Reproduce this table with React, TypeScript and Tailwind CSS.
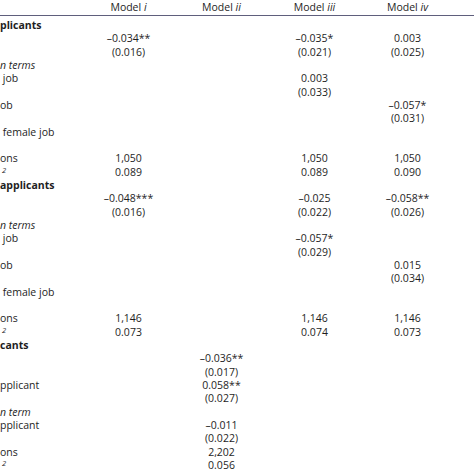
type Row = {
  label?: string
  kind?: "bold" | "italic" | "sup"
  v?: [string?, string?, string?, string?]
}

const rows: Row[] = [
  { label: "plicants", kind: "bold" },
  { v: ["–0.034**", "", "–0.035*", "0.003"] },
  { v: ["(0.016)", "", "(0.021)", "(0.025)"] },
  { label: "n terms", kind: "italic" },
  { label: "\u00a0job", v: ["", "", "0.003", ""] },
  { v: ["", "", "(0.033)", ""] },
  { label: "ob", v: ["", "", "", "–0.057*"] },
  { v: ["", "", "", "(0.031)"] },
  { label: "\u00a0female job" },
  {},
  { label: "ons", v: ["1,050", "", "1,050", "1,050"] },
  { label: "2", kind: "sup", v: ["0.089", "", "0.089", "0.090"] },
  { label: "applicants", kind: "bold" },
  { v: ["–0.048***", "", "–0.025", "–0.058**"] },
  { v: ["(0.016)", "", "(0.022)", "(0.026)"] },
  { label: "n terms", kind: "italic" },
  { label: "\u00a0job", v: ["", "", "–0.057*", ""] },
  { v: ["", "", "(0.029)", ""] },
  { label: "ob", v: ["", "", "", "0.015"] },
  { v: ["", "", "", "(0.034)"] },
  { label: "\u00a0female job" },
  {},
  { label: "ons", v: ["1,146", "", "1,146", "1,146"] },
  { label: "2", kind: "sup", v: ["0.073", "", "0.074", "0.073"] },
  { label: "cants", kind: "bold" },
  { v: ["", "–0.036**", "", ""] },
  { v: ["", "(0.017)", "", ""] },
  { label: "pplicant", v: ["", "0.058**", "", ""] },
  { v: ["", "(0.027)", "", ""] },
  { label: "n term", kind: "italic" },
  { label: "pplicant", v: ["", "–0.011", "", ""] },
  { v: ["", "(0.022)", "", ""] },
  { label: "ons", v: ["", "2,202", "", ""] },
  { label: "2", kind: "sup", v: ["", "0.056", "", ""] },
]

const grid = "grid grid-cols-[82px_93px_93px_93px_93px_1fr]"

function Label({ row }: { row: Row }) {
  if (!row.label) return <div />
  if (row.kind === "sup") {
    return (
      <div className="overflow-hidden pl-[2px]">
        <span className="block text-[7.5px] leading-[8px] italic">{row.label}</span>
      </div>
    )
  }
  const style =
    row.kind === "bold" ? "font-bold" : row.kind === "italic" ? "italic" : ""
  return (
    <div className="overflow-hidden whitespace-nowrap">
      <span className={`block ${style}`}>{row.label}</span>
    </div>
  )
}

export default function App() {
  return (
    <div
      className="h-[474px] w-[474px] overflow-hidden bg-white text-[10.5px] text-[#1e1e1e]"
      style={{ fontFamily: '"Open Sans", "Noto Sans", sans-serif' }}
    >
      <div className={`${grid} h-[16px] border-b border-[#5f5f7c] leading-[15px]`}>
        <div />
        <div className="text-center">
          Model <i>i</i>
        </div>
        <div className="text-center">
          Model <i>ii</i>
        </div>
        <div className="text-center">
          Model <i>iii</i>
        </div>
        <div className="text-center">
          Model <i>iv</i>
        </div>
        <div />
      </div>
      <div className="pt-[3px]">
        {rows.map((row, i) => (
          <div key={i} className={`${grid} h-[13.33px] leading-[13.33px]`}>
            <Label row={row} />
            {[0, 1, 2, 3].map((c) => (
              <div key={c} className="text-center whitespace-nowrap">
                {row.v?.[c] ?? ""}
              </div>
            ))}
            <div />
          </div>
        ))}
      </div>
    </div>
  )
}
